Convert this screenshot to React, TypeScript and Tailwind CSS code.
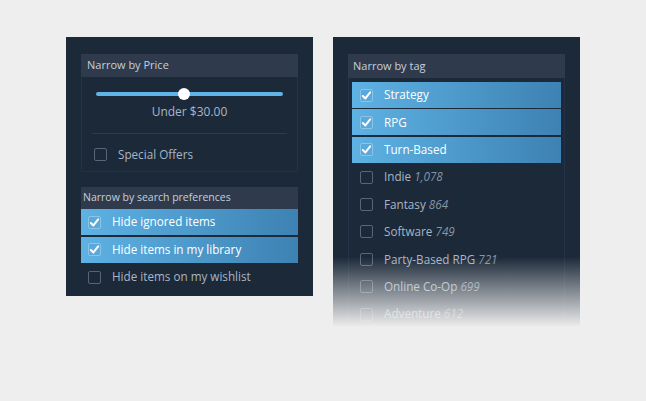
import React from "react";

const font = { fontFamily: '"Open Sans", "Noto Sans", sans-serif' };

function Box({ checked }: { checked: boolean }) {
  return (
    <span
      className={
        "flex h-[13px] w-[13px] shrink-0 items-center justify-center rounded-[2px] border " +
        (checked ? "border-[#8cc4e6] bg-[#5aa9da]" : "border-[#56657a] bg-transparent")
      }
    >
      {checked && (
        <svg width="11" height="11" viewBox="0 0 12 12">
          <path d="M2 6.5 L4.8 9.2 L10 2.6" fill="none" stroke="#ffffff" strokeWidth="2.2" strokeLinecap="round" strokeLinejoin="round" />
        </svg>
      )}
    </span>
  );
}

function Row({ label, count, checked, inset }: { label: string; count?: string; checked?: boolean; inset?: boolean }) {
  return (
    <div
      className={
        "flex h-[26px] items-center gap-[11px] text-[11.7px] font-medium " +
        (inset ? "mx-[3px] pl-[8px] " : "pl-[7px] ") +
        (checked
          ? "bg-gradient-to-r from-[#5eb2e4] to-[#3d82b3] text-white"
          : "text-[#a7b6c6]")
      }
    >
      <Box checked={!!checked} />
      <span>
        {label}
        {count && <span className="italic font-normal text-[#8594a5]"> {count}</span>}
      </span>
    </div>
  );
}

export default function App() {
  return (
    <div className="flex h-[401px] w-[646px] items-start gap-[20px] bg-[#eeeeee] pl-[66px] pt-[37px]" style={font}>
      {/* Left panel */}
      <div className="flex h-[259px] w-[247px] flex-col bg-[#1c2939] px-[15px] pt-[17px]">
        <div className="flex h-[23px] items-center bg-[#2f3b4c] pl-[6px] text-[11px] font-medium text-[#c5cfda]">Narrow by Price</div>
        <div className="flex h-[95px] flex-col border border-t-0 border-[#233246] px-[10px]">
          <div className="relative mt-[15px] h-[4px] mx-[4px] rounded-full bg-[#5fb3e6]">
            <div className="absolute left-[82px] top-[-4px] h-[12px] w-[12px] rounded-full bg-white" />
          </div>
          <div className="mt-[7px] text-center text-[12px] font-medium text-[#a7b6c6]">Under $30.00</div>
          <div className="mt-[12px] h-px bg-[#2c3b4e]" />
          <div className="mt-[12px] flex items-center gap-[11px] pl-[2px] text-[11.7px] font-medium text-[#a7b6c6]">
            <Box checked={false} />
            <span>Special Offers</span>
          </div>
        </div>
        <div className="mt-[15px] flex h-[22px] items-center bg-[#2f3b4c] pl-[2px] text-[10.5px] font-medium text-[#c5cfda]">Narrow by search preferences</div>
        <div className="flex flex-col gap-[1.5px]">
          <Row label="Hide ignored items" checked />
          <Row label="Hide items in my library" checked />
          <Row label="Hide items on my wishlist" />
        </div>
      </div>

      {/* Right panel */}
      <div className="relative h-[290px] w-[247px] overflow-hidden bg-[#1c2939] px-[15px] pt-[17px]">
        <div className="flex h-[24px] items-center bg-[#2f3b4c] pl-[5px] text-[11px] font-medium text-[#c5cfda]">Narrow by tag</div>
        <div className="flex flex-col gap-[1.4px] border border-t-0 border-[#233246] pt-[4px]">
          <Row inset label="Strategy" checked />
          <Row inset label="RPG" checked />
          <Row inset label="Turn-Based" checked />
          <Row inset label="Indie" count="1,078" />
          <Row inset label="Fantasy" count="864" />
          <Row inset label="Software" count="749" />
          <Row inset label="Party-Based RPG" count="721" />
          <Row inset label="Online Co-Op" count="699" />
          <Row inset label="Adventure" count="612" />
        </div>
        <div className="pointer-events-none absolute bottom-0 left-0 right-0 h-[70px] bg-gradient-to-b from-[#eeeeee00] via-[#eeeeee80] to-[#eeeeee]" />
      </div>
    </div>
  );
}
